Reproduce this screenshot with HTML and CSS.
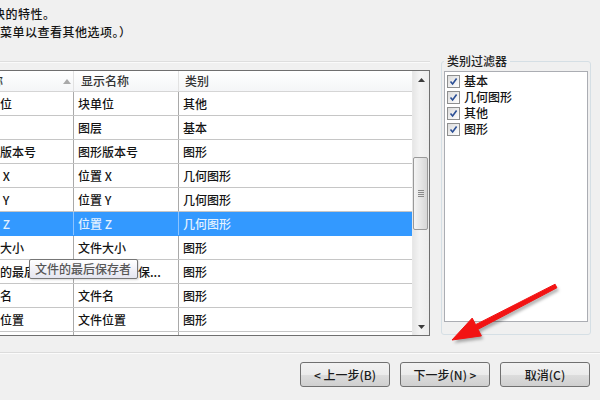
FILE: index.html
```html
<!DOCTYPE html>
<html lang="zh-CN">
<head>
  <meta charset="UTF-8" />
  <title>块特性</title>
  <link rel="stylesheet" href="styles.css">
</head>
<body>
  <div class="page">

    <!-- Intro text -->
    <div class="intro">
      <p class="line1">选定块的特性。</p>
      <p class="line2">右键菜单以查看其他选项。）</p>
    </div>

    <div class="main">
      <!-- Property list -->
      <div class="list-col">
        <div class="rule"></div>
        <div class="grid">
          <div class="grid-body">
            <div class="row head">
              <span class="c1"><span class="hname">名称</span><svg class="sort" width="8" height="5" viewBox="0 0 8 5"><path d="M0 5 L4 0 L8 5 Z" fill="#a9a9a9"/></svg></span>
              <span class="c2">显示名称</span>
              <span class="c3">类别</span>
            </div>
            <div class="row"><span class="c1">块单位</span><span class="c2">块单位</span><span class="c3">其他</span></div>
            <div class="row"><span class="c1">图层</span><span class="c2">图层</span><span class="c3">基本</span></div>
            <div class="row"><span class="c1">图形版本号</span><span class="c2">图形版本号</span><span class="c3">图形</span></div>
            <div class="row"><span class="c1">位置 X</span><span class="c2">位置 X</span><span class="c3">几何图形</span></div>
            <div class="row"><span class="c1">位置 Y</span><span class="c2">位置 Y</span><span class="c3">几何图形</span></div>
            <div class="row selected"><span class="c1">位置 Z</span><span class="c2">位置 Z</span><span class="c3">几何图形</span></div>
            <div class="row"><span class="c1">文件大小</span><span class="c2">文件大小</span><span class="c3">图形</span></div>
            <div class="row"><span class="c1">文件的最后保存者</span><span class="c2">文件的最后保...</span><span class="c3">图形</span></div>
            <div class="row"><span class="c1">文件名</span><span class="c2">文件名</span><span class="c3">图形</span></div>
            <div class="row"><span class="c1">文件位置</span><span class="c2">文件位置</span><span class="c3">图形</span></div>
            <div class="row"><span class="c1"></span><span class="c2"></span><span class="c3"></span></div>
          </div>

          <div class="vscroll">
            <div class="sbtn"><svg width="7" height="4" viewBox="0 0 7 4"><path d="M0 4 L3.5 0 L7 4 Z" fill="#3c3c3c"/></svg></div>
            <div class="track">
              <div class="thumb"><span class="grip"></span></div>
            </div>
            <div class="sbtn"><svg width="7" height="4" viewBox="0 0 7 4"><path d="M0 0 L3.5 4 L7 0 Z" fill="#3c3c3c"/></svg></div>
          </div>
        </div>
      </div>

      <!-- Category filter -->
      <fieldset class="filter">
        <legend>类别过滤器</legend>
        <div class="listbox">
          <div class="item"><span class="check"><svg width="9" height="9" viewBox="0 0 9 9"><path d="M1.5 4.5 L3.6 7 L7.6 1.5" fill="none" stroke="#2b4f95" stroke-width="1.6"/></svg></span>基本</div>
          <div class="item"><span class="check"><svg width="9" height="9" viewBox="0 0 9 9"><path d="M1.5 4.5 L3.6 7 L7.6 1.5" fill="none" stroke="#2b4f95" stroke-width="1.6"/></svg></span>几何图形</div>
          <div class="item"><span class="check"><svg width="9" height="9" viewBox="0 0 9 9"><path d="M1.5 4.5 L3.6 7 L7.6 1.5" fill="none" stroke="#2b4f95" stroke-width="1.6"/></svg></span>其他</div>
          <div class="item"><span class="check"><svg width="9" height="9" viewBox="0 0 9 9"><path d="M1.5 4.5 L3.6 7 L7.6 1.5" fill="none" stroke="#2b4f95" stroke-width="1.6"/></svg></span>图形</div>
        </div>
      </fieldset>
    </div>

    <!-- Wizard buttons -->
    <div class="footer">
      <button class="btn">&lt; 上一步(<u>B</u>)</button>
      <button class="btn">下一步(<u>N</u>) &gt;</button>
      <button class="btn">取消(<u>C</u>)</button>
    </div>

    <!-- Tooltip over the list -->
    <div class="tooltip">文件的最后保存者</div>

    <!-- Red annotation arrow -->
    <svg class="annot" width="600" height="400" viewBox="0 0 600 400">
      <defs>
        <filter id="soft" x="-10%" y="-10%" width="120%" height="120%">
          <feGaussianBlur stdDeviation="1.5"/>
        </filter>
      </defs>
      <polygon points="555.1,284.2 475.6,324.7 472.2,318.1 452,340 481.4,335.9 478,329.3 556.9,287.8" fill="rgba(0,0,0,0.3)" transform="translate(2,3)" filter="url(#soft)"/>
      <polygon points="555.1,284.2 475.6,324.7 472.2,318.1 452,340 481.4,335.9 478,329.3 556.9,287.8" fill="#f21313" stroke="#f21313" stroke-width="1" stroke-linejoin="round"/>
    </svg>
  </div>
</body>
</html>
```

FILE: styles.css
```css
:root {
  --bg: #f0f0f0;
  --text: #141414;
  --grid-line: #c6c6c6;
  --col-line: #a9a9a9;
  --select: #3399ff;
}

body {
  margin: 0;
  background: var(--bg);
  font-family: "Noto Sans CJK SC", "Liberation Sans", sans-serif;
  font-size: 12px;
  font-weight: 500;
  color: var(--text);
}

.page {
  position: relative;
  width: 600px;
  height: 400px;
  overflow: hidden;
}

.intro {
  height: 54px;
  padding-top: 5px;
  box-sizing: border-box;
}

.intro p {
  margin: 0;
  line-height: 18px;
  white-space: nowrap;
  letter-spacing: 0.5px;
}

.intro .line1 {
  margin-left: -32px;
}

.intro .line2 {
  margin-left: -25px;
}

.main {
  display: flex;
  height: 284px;
}

.list-col {
  margin-left: -30px;
  width: 460px;
}

.rule {
  margin-top: 7px;
  height: 1px;
  background: #dedede;
  box-shadow: 0 1px 0 #fafafa;
}

.grid {
  margin-top: 8px;
  height: 266px;
  border: 1px solid #6f6f6f;
  box-sizing: border-box;
  display: flex;
  background: #fff;
}

.grid-body {
  width: 441px;
  overflow: hidden;
}

.row {
  display: flex;
  height: 24px;
  border-bottom: 1px solid var(--grid-line);
  box-sizing: border-box;
}

.row span.c1,
.row span.c2,
.row span.c3 {
  display: flex;
  align-items: center;
  white-space: nowrap;
  overflow: hidden;
  box-sizing: border-box;
  line-height: 14px;
}

.c1 {
  width: 103px;
  padding-left: 5px;
  border-right: 1px solid var(--col-line);
}

.c2 {
  width: 105px;
  padding-left: 4px;
  border-right: 1px solid var(--col-line);
}

.c3 {
  width: 233px;
  padding-left: 4px;
}

.row.head {
  height: 21px;
  background: linear-gradient(#ffffff, #f4f5f7);
  border-bottom: 1px solid #d5d5d5;
  color: #333;
}

.row.head .c1,
.row.head .c2 {
  border-right-color: #e2e2e2;
}

.row.head .c1 {
  padding-left: 8px;
}

.row.head .c2 {
  padding-left: 7px;
}

.row.head .c3 {
  padding-left: 6px;
}

.sort {
  margin-left: auto;
  margin-right: 2px;
}

.row.selected {
  background: var(--select);
  color: #e3f1ff;
  border-bottom-color: var(--select);
}

.row.selected .c1,
.row.selected .c2 {
  border-right-color: #8cc4ff;
}

/* scrollbar */
.vscroll {
  width: 17px;
  display: flex;
  flex-direction: column;
  background: linear-gradient(to right, #e6e6e6, #f3f3f3 40%, #ececec);
  border-left: 1px solid #e8e8e8;
  box-sizing: border-box;
}

.sbtn {
  height: 17px;
  display: flex;
  align-items: center;
  justify-content: center;
}

.track {
  flex: 1;
}

.thumb {
  margin: 69px 1px 0 0;
  height: 71px;
  border: 1px solid #999;
  border-radius: 2px;
  background: linear-gradient(to right, #f4f4f4, #e6e6e6 50%, #d6d6d6);
  display: flex;
  align-items: center;
  justify-content: center;
}

.grip {
  width: 6px;
  height: 7px;
  background: repeating-linear-gradient(#8a8a8a 0 1px, transparent 1px 2px);
}

/* filter group */
.filter {
  margin: 0 0 0 11px;
  padding: 0 2px;
  width: 150px;
  height: 281px;
  box-sizing: border-box;
  border: 1px solid #d5dfe5;
  border-radius: 3px;
}

.filter legend {
  padding: 0 3px;
  line-height: 14px;
  color: #222;
}

.listbox {
  margin-top: 3px;
  height: 251px;
  border: 1px solid #abadb3;
  background: #fff;
  padding-top: 1px;
  box-sizing: border-box;
}

.item {
  height: 16px;
  display: flex;
  align-items: center;
  line-height: 14px;
}

.check {
  width: 13px;
  height: 13px;
  margin: 0 4px 0 2px;
  border: 1px solid #8e8f8f;
  box-sizing: border-box;
  background: linear-gradient(135deg, #dcdcdc, #fefefe);
  display: flex;
  align-items: center;
  justify-content: center;
}

/* footer */
.footer {
  margin-top: 14px;
  border-top: 1px solid #dcdcdc;
  box-shadow: inset 0 1px 0 #fbfbfb;
  padding: 9px 10px 0 0;
  display: flex;
  justify-content: flex-end;
  gap: 10px;
}

.btn {
  width: 90px;
  height: 25px;
  border: 1px solid #707070;
  border-radius: 3px;
  background: linear-gradient(#f2f2f2, #ebebeb 50%, #dddddd 51%, #cfcfcf);
  font-family: inherit;
  font-size: 12px;
  font-weight: 500;
  color: #1c1c1c;
  padding: 0;
  line-height: 14px;
}

.btn u {
  text-decoration: none;
}

.tooltip {
  position: absolute;
  left: 29px;
  top: 259px;
  width: 109px;
  height: 20px;
  box-sizing: border-box;
  border: 1px solid #767676;
  border-radius: 2px;
  background: linear-gradient(#ffffff, #e4e5f0);
  color: #575757;
  padding-left: 5px;
  line-height: 18px;
  white-space: nowrap;
  box-shadow: 1px 1px 2px rgba(0, 0, 0, 0.15);
}

.annot {
  position: absolute;
  left: 0;
  top: 0;
  pointer-events: none;
}
```
